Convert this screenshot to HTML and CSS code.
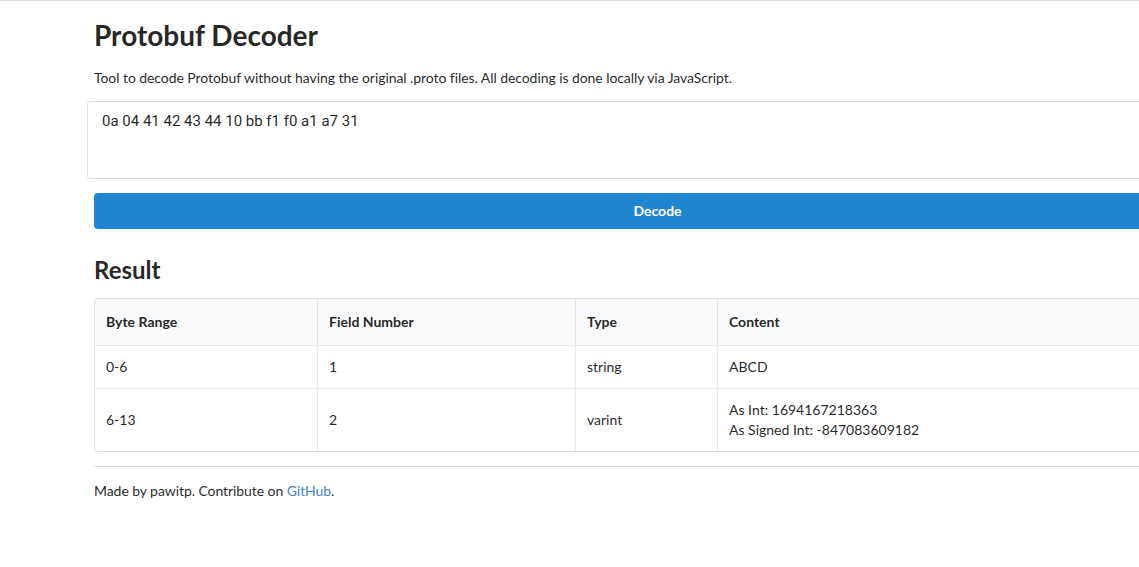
FILE: index.html
```html
<!DOCTYPE html>
<html lang="en">
<head>
<meta charset="utf-8">
<title>Protobuf Decoder</title>
<link rel="stylesheet" href="styles.css">
</head>
<body>
<div class="page">
  <div class="container">
    <h1 class="title">Protobuf Decoder</h1>
    <p class="intro">Tool to decode Protobuf without having the original .proto files. All decoding is done locally via JavaScript.</p>
    <form class="form">
      <textarea class="input" rows="3">0a 04 41 42 43 44 10 bb f1 f0 a1 a7 31</textarea>
      <button type="button" class="decode">Decode</button>
    </form>
    <h2 class="result-title">Result</h2>
    <table class="result">
      <colgroup>
        <col class="c1"><col class="c2"><col class="c3"><col class="c4">
      </colgroup>
      <thead>
        <tr><th>Byte Range</th><th>Field Number</th><th>Type</th><th>Content</th></tr>
      </thead>
      <tbody>
        <tr><td>0-6</td><td>1</td><td>string</td><td>ABCD</td></tr>
        <tr><td>6-13</td><td>2</td><td>varint</td><td>As Int: 1694167218363<br>As Signed Int: -847083609182</td></tr>
      </tbody>
    </table>
    <div class="divider"></div>
    <p class="footer">Made by pawitp. Contribute on <a href="#" class="link">GitHub</a>.</p>
  </div>
</div>
</body>
</html>
```

FILE: styles.css
```css
html, body {
  margin: 0;
  padding: 0;
  background: #ffffff;
}
body {
  border-top: 1px solid #dedede;
  overflow: hidden;
  font-family: Lato, "Helvetica Neue", Arial, sans-serif;
  font-size: 14px;
  line-height: 20px;
  color: rgba(0, 0, 0, 0.87);
}
.page {
  width: 1400px;
}
.container {
  margin-left: 94px;
  width: 1127px;
}
.title {
  margin: 16px 0 15px;
  font-size: 28px;
  line-height: 36px;
  font-weight: 700;
}
.intro {
  margin: 0 0 13px;
  letter-spacing: -0.07px;
}
.form {
  margin: 0;
  display: flex;
  flex-direction: column;
}
.input {
  display: block;
  margin: 0 0 14px -7px;
  width: 1150px;
  height: 78px;
  box-sizing: border-box;
  padding: 10px 14px 11px;
  border: 1px solid rgba(34, 36, 38, 0.15);
  border-radius: 4px;
  font-family: Roboto, "Segoe UI", Arial, sans-serif;
  font-size: 15px;
  line-height: 18px;
  color: rgba(0, 0, 0, 0.87);
  resize: none;
  outline: none;
  background: #fff;
}
.decode {
  display: block;
  width: 1127px;
  height: 36px;
  margin: 0;
  padding: 0;
  border: none;
  border-radius: 4px;
  background: #2185d0;
  color: #ffffff;
  font-family: Lato, "Helvetica Neue", Arial, sans-serif;
  font-size: 14px;
  font-weight: 700;
  line-height: 14px;
}
.result-title {
  margin: 25px 0 13px;
  font-size: 24px;
  line-height: 31px;
  font-weight: 700;
}
.result {
  width: 1127px;
  border: 1px solid rgba(34, 36, 38, 0.15);
  border-radius: 4px;
  border-collapse: separate;
  border-spacing: 0;
  table-layout: fixed;
}
.c1 { width: 222px; }
.c2 { width: 258px; }
.c3 { width: 142px; }
.result th {
  background: #f9fafb;
  text-align: left;
  font-weight: 700;
  padding: 13px 11px;
  border-left: 1px solid rgba(34, 36, 38, 0.1);
  vertical-align: middle;
}
.result th:first-child {
  border-left: none;
  border-radius: 4px 0 0 0;
}
.result td {
  padding: 11px 11px;
  border-top: 1px solid rgba(34, 36, 38, 0.1);
  border-left: 1px solid rgba(34, 36, 38, 0.1);
  vertical-align: middle;
}
.result td:first-child {
  border-left: none;
}
.divider {
  margin: 14px 0;
  height: 0;
  border-top: 1px solid rgba(34, 36, 38, 0.15);
}
.footer {
  margin: 0;
  letter-spacing: -0.07px;
}
.link {
  color: #4183c4;
  text-decoration: none;
}
```
